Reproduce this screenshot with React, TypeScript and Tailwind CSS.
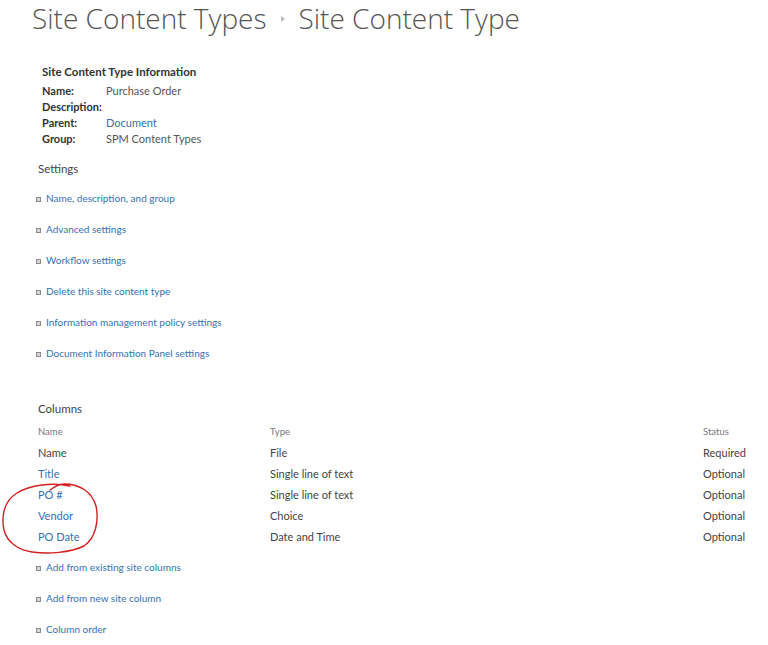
import React from "react";

const font = { fontFamily: 'Lato, "Open Sans", sans-serif' };
const titleFont = { fontFamily: '"Open Sans", "Noto Sans", sans-serif' };

function Bullet() {
  return <span className="inline-block w-[5px] h-[5px] border border-[#8a8a8a] bg-[#d8d8d8] mr-[5px] mt-[1px]" />;
}

function LinkItem({ text }: { text: string }) {
  return (
    <div className="flex items-center h-[31px] pl-[36px]">
      <Bullet />
      <span className="text-[10px] text-[#3371b5]">{text}</span>
    </div>
  );
}

const settings = [
  "Name, description, and group",
  "Advanced settings",
  "Workflow settings",
  "Delete this site content type",
  "Information management policy settings",
  "Document Information Panel settings",
];

const rows = [
  { name: "Name", link: false, type: "File", status: "Required" },
  { name: "Title", link: true, type: "Single line of text", status: "Optional" },
  { name: "PO #", link: true, type: "Single line of text", status: "Optional" },
  { name: "Vendor", link: true, type: "Choice", status: "Optional" },
  { name: "PO Date", link: true, type: "Date and Time", status: "Optional" },
];

export default function App() {
  return (
    <div className="w-[768px] h-[645px] bg-white relative overflow-hidden text-[#444]" style={font}>
      <div className="pl-[32px] flex items-center h-[36px]" style={titleFont}>
        <span className="text-[28px] font-light text-[#555]">Site Content Types</span>
        <span className="mx-[14px] mt-[2px] w-0 h-0 border-y-[3px] border-y-transparent border-l-[4px] border-l-[#b8b8b8]" />
        <span className="text-[28px] font-light text-[#555]">Site Content Type</span>
      </div>

      <div className="pl-[42px] pt-[28px]">
        <div className="text-[11.5px] font-bold text-[#333] leading-[16px] mb-[3px]">Site Content Type Information</div>
        {[
          ["Name:", "Purchase Order", false],
          ["Description:", "", false],
          ["Parent:", "Document", true],
          ["Group:", "SPM Content Types", false],
        ].map(([l, v, link]) => (
          <div key={l as string} className="flex leading-[16px] text-[11px]">
            <span className="w-[64px] font-bold text-[#333]">{l}</span>
            <span className={link ? "text-[#3371b5]" : "text-[#555]"}>{v}</span>
          </div>
        ))}
      </div>

      <div className="pl-[38px] pt-[14px] text-[11.5px] text-[#444] leading-[16px]">Settings</div>
      <div className="pt-[6px]">
        {settings.map((s) => (
          <LinkItem key={s} text={s} />
        ))}
      </div>

      <div className="pl-[38px] pt-[32px] text-[11.5px] text-[#444] leading-[16px]">Columns</div>
      <div className="pl-[38px] pr-[24px] pt-[7px]">
        <div className="grid grid-cols-[232px_1fr_auto] text-[9.5px] text-[#777] leading-[16px] mb-[2px]">
          <span>Name</span>
          <span>Type</span>
          <span className="w-[41px]">Status</span>
        </div>
        {rows.map((r) => (
          <div key={r.name} className="grid grid-cols-[232px_1fr_auto] text-[11px] leading-[21px]">
            <span className={r.link ? "text-[#3371b5]" : "text-[#444]"}>{r.name}</span>
            <span className="text-[#444]">{r.type}</span>
            <span className="w-[41px] text-[#444]">{r.status}</span>
          </div>
        ))}
      </div>
      <div className="pt-[5px]">
        {["Add from existing site columns", "Add from new site column", "Column order"].map((s) => (
          <LinkItem key={s} text={s} />
        ))}
      </div>

      <svg className="absolute left-0 top-[478px]" width="110" height="80" viewBox="0 0 110 80" fill="none">
        <path
          d="M70 8 C 52 4, 30 7, 17 15 C 4 23, 1 38, 4 52 C 7 64, 18 72, 32 74 C 48 76, 70 75, 84 68 C 96 60, 99 42, 96 28 C 92 14, 80 6, 64 6 C 58 6, 54 9, 50 12"
          stroke="#d42020"
          strokeWidth="1.4"
          strokeLinecap="round"
        />
      </svg>
    </div>
  );
}
